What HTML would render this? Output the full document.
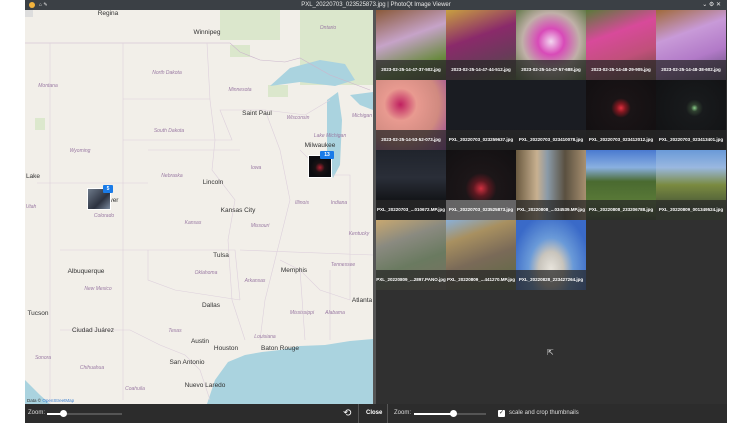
<!DOCTYPE html>
<html><head><meta charset="utf-8"><style>
*{margin:0;padding:0;box-sizing:border-box}
body{width:752px;height:423px;overflow:hidden;background:#fff;font-family:"Liberation Sans",sans-serif;position:relative}
.tb{position:absolute;left:25px;top:0;width:702px;height:10px;background:#3b4045;color:#e8e8e8;font-size:6px;line-height:10px;text-align:center}
.map{position:absolute;left:25px;top:10px;width:348px;height:394px;background:#f2efe9;overflow:hidden}
.div{position:absolute;left:373px;top:10px;width:3px;height:394px;background:#555}
.grid{position:absolute;left:376px;top:10px;width:351px;height:394px;background:#303030}
.c{position:absolute;width:70px;height:70px;overflow:hidden}
.c .l{position:absolute;left:0;bottom:0;width:70px;height:20px;background:rgba(40,40,40,.75);color:#fff;font-size:4.5px;font-weight:bold;text-align:center;line-height:20px;white-space:nowrap}
.bot{position:absolute;left:25px;top:404px;width:702px;height:19px;background:#2c2c2c;color:#ddd;font-size:6px;line-height:19px}
</style></head><body>
<div class="tb"><span style="position:absolute;left:4px;top:2px;width:6px;height:6px;border-radius:50%;background:#f2b33d"></span><span style="position:absolute;left:14px;font-size:5px">⌂ ✎</span>PXL_20220703_023525873.jpg | PhotoQt Image Viewer<span style="position:absolute;right:6px">⌄ ⚙ ✕</span></div>
<div class="map">
<svg width="348" height="394" viewBox="25 10 348 394" style="position:absolute;left:0;top:0" font-family="Liberation Sans" font-size="6.5">
<g fill="#d6e6c6" opacity=".8"><rect x="220" y="10" width="60" height="30"/><rect x="300" y="10" width="73" height="75"/><rect x="230" y="45" width="20" height="12"/><rect x="268" y="85" width="20" height="12"/><rect x="35" y="118" width="10" height="12"/></g>
<g fill="#aad3df">
<path d="M270 86 L290 68 L320 60 L345 64 L355 80 L335 86 L300 82 Z"/>
<path d="M327 100 L338 92 L342 120 L340 165 L333 178 L327 160 Z"/>
<path d="M350 95 L373 92 L373 110 L360 105 Z"/>
<path d="M207 404 L215 380 L228 362 L245 355 L262 352 L280 350 L300 346 L325 345 L350 341 L373 339 L373 404 Z"/>
<path d="M25 380 L40 395 L50 404 L25 404 Z"/>
</g>
<g fill="none" stroke="#ddd0dc" stroke-width=".6">
<path d="M25 43 L230 43 L240 52 L260 60 L285 62 L300 58 L330 75 L370 90" stroke="#cbb6cc"/>
<path d="M123 43 V400 M50 43 V410"/><path d="M207 43 L210 100 L215 140 L212 170 L235 200 L228 240 L232 300 L245 340"/>
<path d="M123 99 H210 M123 140 L232 140 L220 110 L265 110 L305 115 L330 100 M148 150 H240 M37 183 H148 M148 250 H235 L240 300 M60 250 H148 M148 250 V280 L175 290 L240 300 M60 330 L130 330 L160 345 L185 355 L200 370 L210 400"/>
<path d="M265 110 L280 150 L290 200 L275 260 L265 300 L260 340 M300 150 L325 175 L350 175 V300 L320 290 L300 270 L280 260 M240 250 L373 255 M300 270 L305 340 M330 270 L330 340"/>
</g>
<g fill="#333" text-anchor="middle">
<text x="108" y="15">Regina</text><text x="207" y="34">Winnipeg</text><text x="257" y="115">Saint Paul</text><text x="320" y="147">Milwaukee</text><text x="213" y="184">Lincoln</text><text x="238" y="212">Kansas City</text><text x="108" y="202">Denver</text><text x="33" y="178">Lake</text><text x="221" y="257">Tulsa</text><text x="294" y="272">Memphis</text><text x="86" y="273">Albuquerque</text><text x="211" y="307">Dallas</text><text x="362" y="302">Atlanta</text><text x="38" y="315">Tucson</text><text x="93" y="332">Ciudad Juárez</text><text x="200" y="343">Austin</text><text x="280" y="350">Baton Rouge</text><text x="226" y="350">Houston</text><text x="187" y="364">San Antonio</text><text x="205" y="387">Nuevo Laredo</text>
</g>
<g fill="#9a7aa3" font-style="italic" font-size="5" text-anchor="middle">
<text x="328" y="29">Ontario</text><text x="167" y="74">North Dakota</text><text x="48" y="87">Montana</text><text x="240" y="91">Minnesota</text><text x="298" y="119">Wisconsin</text><text x="169" y="132">South Dakota</text><text x="362" y="117">Michigan</text><text x="330" y="137">Lake Michigan</text><text x="80" y="152">Wyoming</text><text x="172" y="177">Nebraska</text><text x="256" y="169">Iowa</text><text x="302" y="204">Illinois</text><text x="339" y="204">Indiana</text><text x="104" y="217">Colorado</text><text x="193" y="224">Kansas</text><text x="260" y="227">Missouri</text><text x="359" y="235">Kentucky</text><text x="31" y="208">Utah</text><text x="343" y="266">Tennessee</text><text x="206" y="274">Oklahoma</text><text x="255" y="282">Arkansas</text><text x="98" y="290">New Mexico</text><text x="302" y="314">Mississippi</text><text x="335" y="314">Alabama</text><text x="175" y="332">Texas</text><text x="265" y="338">Louisiana</text><text x="43" y="359">Sonora</text><text x="92" y="369">Chihuahua</text><text x="135" y="390">Coahuila</text>
</g>
<text x="27" y="402" font-size="4.5" fill="#333">Data © <tspan fill="#3a7fd0">OpenStreetMap</tspan></text>
<rect x="25" y="10" width="8" height="7" fill="#ddd"/>
</svg>
<div style="position:absolute;left:62px;top:178px;width:24px;height:22px;background:linear-gradient(135deg,#6e7a8a,#2c3240 60%,#7a8aa0);border:1px solid #fff"></div>
<div style="position:absolute;left:78px;top:175px;width:10px;height:8px;background:#1a7be8;color:#fff;font-size:5px;font-weight:bold;text-align:center;line-height:8px;border-radius:1px">5</div>
<div style="position:absolute;left:283px;top:145px;width:24px;height:23px;background:radial-gradient(circle at 50% 55%,#b02030 0,#1a1214 30%,#0c0c10 60%);border:1px solid #fff"></div>
<div style="position:absolute;left:295px;top:141px;width:14px;height:8px;background:#1a7be8;color:#fff;font-size:5px;font-weight:bold;text-align:center;line-height:8px;border-radius:1px">13</div>
</div>
<div class="div"></div>
<div class="grid">
<div class="c" style="left:0;top:0;background:linear-gradient(160deg,#8a5a3a,#c6a3c8 40%,#6a8a40 75%,#4a4a30)"><div class="l">2023-02-25-14-47-37-502.jpg</div></div>
<div class="c" style="left:70px;top:0;background:linear-gradient(160deg,#c8a040,#8a2a6a 40%,#6a3a5a 70%,#4a5a30)"><div class="l">2023-02-25-14-47-44-512.jpg</div></div>
<div class="c" style="left:140px;top:0;background:radial-gradient(circle at 50% 45%,#f2d6f0 0,#d84ab8 25%,#c0b0a8 55%,#4a6a30)"><div class="l">2023-02-25-14-47-57-688.jpg</div></div>
<div class="c" style="left:210px;top:0;background:linear-gradient(160deg,#5a7a3a,#d84a9a 35%,#c0507a 65%,#6a4a40)"><div class="l">2023-02-25-14-48-29-905.jpg</div></div>
<div class="c" style="left:280px;top:0;background:linear-gradient(160deg,#a06a3a,#c89ad8 35%,#b27ac8 65%,#5a4a70)"><div class="l">2023-02-25-14-48-38-602.jpg</div></div>
<div class="c" style="left:0;top:70px;background:radial-gradient(circle at 35% 35%,#c02060 0,#e89a90 25%,#d08a80 60%,#8a3aa0)"><div class="l">2023-02-25-14-53-52-073.jpg</div></div>
<div class="c" style="left:70px;top:70px;background:linear-gradient(180deg,#1a1c22 70%,#0c0c0e)"><div class="l">PXL_20220703_023259637.jpg</div></div>
<div class="c" style="left:140px;top:70px;background:linear-gradient(180deg,#1a1c22 70%,#0c0c0e)"><div class="l">PXL_20220703_023410078.jpg</div></div>
<div class="c" style="left:210px;top:70px;background:radial-gradient(circle at 50% 40%,#e03040 0,#801820 8%,#1a1416 18%,#100e10)"><div class="l">PXL_20220703_023412012.jpg</div></div>
<div class="c" style="left:280px;top:70px;background:radial-gradient(circle at 55% 40%,#8ad08a 0,#304030 6%,#181a1c 15%,#101012)"><div class="l">PXL_20220703_023413401.jpg</div></div>
<div class="c" style="left:0;top:140px;background:linear-gradient(180deg,#20242c,#2a2e38 40%,#14161a 70%)"><div class="l">PXL_20220703_...010672.MP.jpg</div></div>
<div class="c" style="left:70px;top:140px;background:radial-gradient(circle at 50% 55%,#d03040 0,#5a1820 15%,#1c1618 30%,#121012)"><div class="l" style="background:rgba(110,110,110,.9)">PXL_20220703_023525873.jpg</div></div>
<div class="c" style="left:140px;top:140px;background:linear-gradient(90deg,#6a5a40,#c8b090 30%,#8a9aa8 45%,#5a5040 70%,#a89070)"><div class="l">PXL_20220808_...034539.MP.jpg</div></div>
<div class="c" style="left:210px;top:140px;background:linear-gradient(180deg,#4a7ad0,#8ab0e0 25%,#4a6a30 45%,#5a7a38 75%,#3a4a28)"><div class="l">PXL_20220808_233206788.jpg</div></div>
<div class="c" style="left:280px;top:140px;background:linear-gradient(180deg,#6a9ad8,#9ab8e0 25%,#7a8a40 50%,#4a5a38 80%)"><div class="l">PXL_20220809_001349524.jpg</div></div>
<div class="c" style="left:0;top:210px;background:linear-gradient(160deg,#c8a870,#8a8a80 30%,#6a7a60 60%,#7a7060)"><div class="l">PXL_20220809_...2897.PANO.jpg</div></div>
<div class="c" style="left:70px;top:210px;background:linear-gradient(160deg,#8ab0d8,#a89060 25%,#7a6a58 55%,#5a6a40)"><div class="l">PXL_20220809_...441270.MP.jpg</div></div>
<div class="c" style="left:140px;top:210px;background:radial-gradient(ellipse at 50% 70%,#e8e4dc 0,#c8c4bc 25%,#6a9ad8 45%,#3a6ac8 80%)"><div class="l">PXL_20220828_223427264.jpg</div></div>
<div style="position:absolute;left:171px;top:338px;color:#ddd;font-size:8px">⇱</div>
</div>
<div class="bot">
<span style="position:absolute;left:3px">Zoom:</span>
<div style="position:absolute;left:22px;top:9px;width:75px;height:2px;background:#555"></div>
<div style="position:absolute;left:22px;top:9px;width:17px;height:2px;background:#fff"></div>
<div style="position:absolute;left:35px;top:6px;width:7px;height:7px;border-radius:50%;background:#fff"></div>
<span style="position:absolute;left:318px;font-size:10px;color:#fff">⟲</span>
<div style="position:absolute;left:333px;top:0;width:1px;height:19px;background:#555"></div>
<span style="position:absolute;left:341px;font-weight:bold;color:#fff">Close</span>
<div style="position:absolute;left:362px;top:0;width:1px;height:19px;background:#555"></div>
<span style="position:absolute;left:369px">Zoom:</span>
<div style="position:absolute;left:389px;top:9px;width:72px;height:2px;background:#555"></div>
<div style="position:absolute;left:389px;top:9px;width:40px;height:2px;background:#fff"></div>
<div style="position:absolute;left:425px;top:6px;width:7px;height:7px;border-radius:50%;background:#fff"></div>
<div style="position:absolute;left:473px;top:6px;width:7px;height:7px;background:#fff;border-radius:1px;color:#222;font-size:6px;line-height:7px;text-align:center">✓</div>
<span style="position:absolute;left:484px">scale and crop thumbnails</span>
</div>
</body></html>
